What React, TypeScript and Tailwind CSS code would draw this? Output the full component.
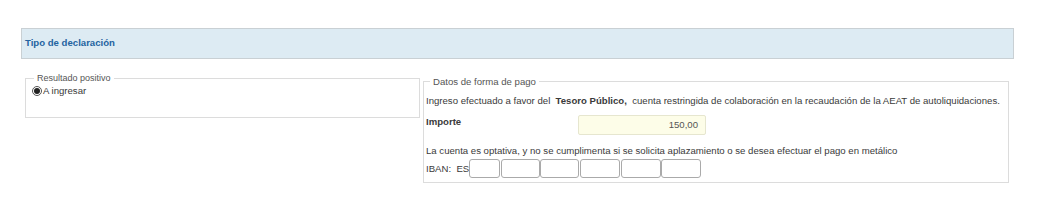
import React from 'react';

const ibanBoxes = [
  'w-[31px] ml-0',
  'w-[39px] ml-[1px]',
  'w-[39px] ml-0',
  'w-[40px] ml-[1px]',
  'w-[40px] ml-[1px]',
  'w-[40px] ml-0',
];

function Radio() {
  return (
    <span className="w-[10px] h-[10px] rounded-full border border-[#555] bg-white flex items-center justify-center shrink-0">
      <span className="w-[6px] h-[6px] rounded-full bg-[#222]" />
    </span>
  );
}

export default function App() {
  return (
    <div className="w-[1044px] h-[209px] bg-white text-[9.6px] text-[#3a3a3a] font-['Liberation_Sans',Arial,sans-serif] pt-[28px]">
      <div className="ml-[21px] w-[993px] h-[31px] bg-[#ddebf3] border border-[#c9d0d4] flex items-center pl-[3px]">
        <span className="font-bold text-[#2463a0]">Tipo de declaración</span>
      </div>

      <div className="flex items-start mt-[13px]">
        <fieldset className="shrink-0 min-w-0 ml-[25px] w-[395px] h-[46px] border border-[#dcdcdc]">
          <legend className="ml-[8px] px-[3px] text-[#555] leading-[13px] text-[9px]">Resultado positivo</legend>
          <div className="flex items-center gap-[1px] pl-[6px] leading-[12px]">
            <Radio />
            <span>A ingresar</span>
          </div>
        </fieldset>

        <fieldset className="shrink-0 min-w-0 ml-[3px] mt-[3px] w-[586px] h-[108px] border border-[#dcdcdc]">
          <legend className="ml-[6px] px-[3px] text-[#555] leading-[13px]">Datos de forma de pago</legend>
          <div className="pl-[2px] flex flex-col">
            <div className="mt-[7px] leading-[12px] whitespace-nowrap">
              Ingreso efectuado a favor del&nbsp; <b>Tesoro Público,</b>&nbsp; cuenta restringida de colaboración en la recaudación de la AEAT de autoliquidaciones.
            </div>
            <div className="flex items-start mt-[8px]">
              <span className="font-bold w-[152px] leading-[12px] pt-[1px]">Importe</span>
              <div className="w-[128px] h-[20px] bg-[#fdfde8] border border-[#e6e6cf] rounded-[2px] flex items-center justify-end pr-[7px] text-[#555]">
                150,00
              </div>
            </div>
            <div className="mt-[10px] leading-[12px] whitespace-nowrap">
              La cuenta es optativa, y no se cumplimenta si se solicita aplazamiento o se desea efectuar el pago en metálico
            </div>
            <div className="flex items-center mt-[2px]">
              <span className="shrink-0 leading-[12px] whitespace-nowrap">IBAN:&nbsp; ES</span>
              {ibanBoxes.map((c, i) => (
                <div key={i} className={`${c} shrink-0 h-[19px] border border-[#aaa] rounded-[3px] bg-white`} />
              ))}
            </div>
          </div>
        </fieldset>
      </div>
    </div>
  );
}
